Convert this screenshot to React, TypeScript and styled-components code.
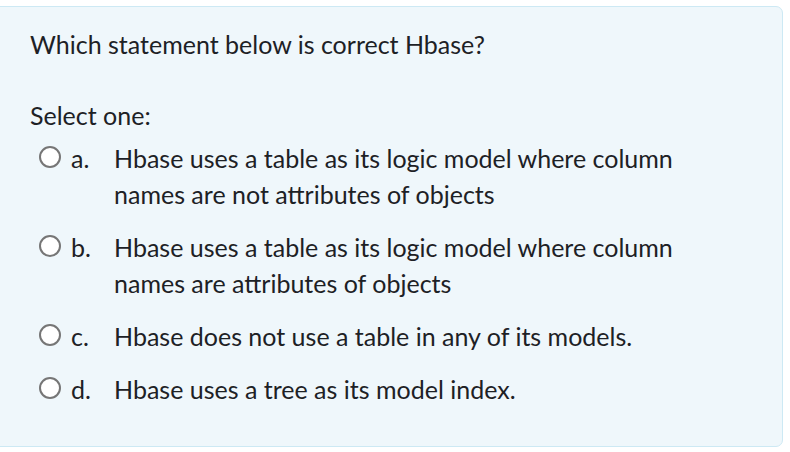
import { createGlobalStyle } from "styled-components";
import styled from "styled-components";

const GlobalStyle = createGlobalStyle`
  html, body {
    margin: 0;
    padding: 0;
    background: #ffffff;
  }

  body {
    font-family: Lato, "Open Sans", sans-serif;
    color: #1d2125;
    overflow: hidden;
  }
`;

const Page = styled.div`
  width: 790px;
  height: 452px;
  padding-top: 6px;
  box-sizing: border-box;
`;

const Card = styled.div`
  margin-left: -12px;
  width: 795px;
  height: 441px;
  box-sizing: border-box;
  padding: 19px 0 0 41px;
  background: #eff7fb;
  border: 1px solid #cde9f4;
  border-radius: 7px;
`;

const Question = styled.p`
  margin: 0;
  font-size: 25px;
  line-height: 36px;
`;

const Prompt = styled.p`
  margin: 35px 0 7px;
  font-size: 25px;
  line-height: 36px;
`;

const Options = styled.div`
  display: flex;
  flex-direction: column;
  gap: 17px;
`;

const Option = styled.label`
  display: flex;
  align-items: flex-start;
  font-size: 25px;
  line-height: 36px;
`;

const Radio = styled.span`
  flex: none;
  width: 22px;
  height: 22px;
  box-sizing: border-box;
  margin: 6px 10px 0 9px;
  border: 2px solid #767676;
  border-radius: 50%;
  background: #ffffff;
`;

const Letter = styled.span`
  flex: none;
  width: 43px;
`;

const Answer = styled.span`
  width: 600px;
`;

const choices = [
  {
    letter: "a.",
    text: "Hbase uses a table as its logic model where column names are not attributes of objects",
  },
  {
    letter: "b.",
    text: "Hbase uses a table as its logic model where column names are attributes of objects",
  },
  { letter: "c.", text: "Hbase does not use a table in any of its models." },
  { letter: "d.", text: "Hbase uses a tree as its model index." },
];

const App: React.FC = () => {
  return (
    <Page>
      <GlobalStyle />
      <Card>
        <Question>Which statement below is correct Hbase?</Question>
        <Prompt>Select one:</Prompt>
        <Options>
          {choices.map((c) => (
            <Option key={c.letter}>
              <Radio />
              <Letter>{c.letter}</Letter>
              <Answer>{c.text}</Answer>
            </Option>
          ))}
        </Options>
      </Card>
    </Page>
  );
};

export default App;
